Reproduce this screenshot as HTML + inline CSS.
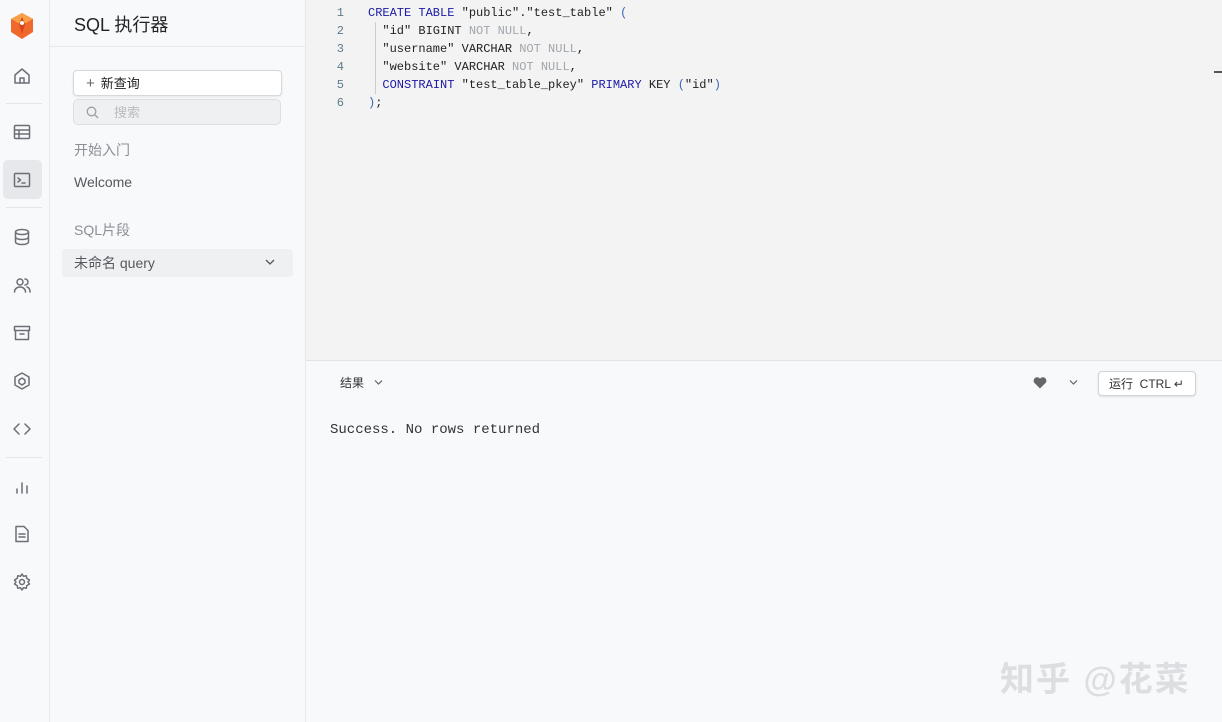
<!DOCTYPE html>
<html><head><meta charset="utf-8"><style>
*{box-sizing:border-box;margin:0;padding:0}
body{width:1222px;height:722px;overflow:hidden;background:#f8f9fa;font-family:"Liberation Sans","Noto Sans CJK SC",sans-serif;position:relative}
.nav{position:absolute;left:0;top:0;width:50px;height:722px;border-right:1px solid #e6e8eb;background:#f8f9fa}
.nav svg{position:absolute;left:12px;width:20px;height:20px;fill:none;stroke:#6b6f76;stroke-width:1.5;stroke-linecap:round;stroke-linejoin:round}
.sep{position:absolute;left:6px;width:36px;height:1px;background:#e3e5e8}
.side{position:absolute;left:50px;top:0;width:256px;height:722px;border-right:1px solid #e6e8eb}
.title{height:47px;border-bottom:1px solid #e6e8eb;padding:11px 0 0 24px;font-size:18px;color:#1f2328}
.btn{position:absolute;left:23px;top:70px;width:209px;height:26px;border:1px solid #d5d8dc;border-radius:4px;background:#fff;box-shadow:0 1px 2px rgba(0,0,0,.08);font-size:13px;color:#222;padding:2px 0 0 12px}
.search{position:absolute;left:23px;top:99px;width:208px;height:26px;border:1px solid #dcdfe2;border-radius:5px;background:#eff0f2;font-size:13px;color:#b8bcc2;padding:2px 0 0 40px}
.lbl{position:absolute;left:24px;font-size:14px;color:#8a8f96}
.item{position:absolute;font-size:14px;color:#55595f}
.editor{position:absolute;left:306px;top:0;width:916px;height:361px;background:#f3f3f3;border-bottom:1px solid #e2e4e6}
.code{position:absolute;left:0;top:3px;font-family:"Liberation Mono",monospace;font-size:12px;line-height:18px;white-space:pre;color:#222}
.ln{position:absolute;left:28px;width:10px;color:#5d7a8c;text-align:right}
.kw{color:#1a1aa6}.g{color:#a0a6ad}.p{color:#3b66b5}
.res{position:absolute;left:306px;top:362px;width:916px;height:360px;background:#f8f9fa}
.run{position:absolute;left:792px;top:9px;width:98px;height:25px;border:1px solid #d0d3d7;border-radius:4px;background:#fff;box-shadow:0 1px 2px rgba(0,0,0,.1);font-size:12px;color:#333;padding:3px 0 0 10px}
</style></head><body>
<div class="nav">
<svg style="top:12px;left:9px;width:26px;height:28px" viewBox="0 0 26 28"><polygon points="13,1 24,7 24,20 13,27 2,20 2,7" fill="#f0682c" stroke="none"/><polygon points="13,1 24,7 13,13 2,7" fill="#f7a049" stroke="none"/><polygon points="13,5 16,12 13,22 10,12" fill="#d9431a" stroke="none"/><circle cx="13" cy="11" r="2" fill="#fff" stroke="none"/></svg>
<svg style="top:66px" viewBox="0 0 20 20"><path d="M3 9l7-6 7 6v8H3z"/><path d="M8 17v-5h4v5"/></svg>
<div class="sep" style="top:103px"></div>
<svg style="top:122px" viewBox="0 0 20 20"><rect x="2.5" y="3.5" width="15" height="13" rx="1"/><path d="M2.5 8h15M2.5 12h15M7 8v8.5"/></svg>
<div style="position:absolute;left:3px;top:160px;width:39px;height:39px;background:#e6e8eb;border-radius:5px"></div>
<svg style="top:170px" viewBox="0 0 20 20"><rect x="2.5" y="3.5" width="15" height="13" rx="1"/><path d="M6 8l2.5 2L6 12M10 13h3"/></svg>
<div class="sep" style="top:207px"></div>
<svg style="top:227px" viewBox="0 0 20 20"><ellipse cx="10" cy="5" rx="6.5" ry="2.5"/><path d="M3.5 5v10c0 1.4 2.9 2.5 6.5 2.5s6.5-1.1 6.5-2.5V5M3.5 10c0 1.4 2.9 2.5 6.5 2.5s6.5-1.1 6.5-2.5"/></svg>
<svg style="top:275px" viewBox="0 0 20 20"><circle cx="8" cy="7" r="3"/><path d="M2.5 17c0-3 2.5-5 5.5-5s5.5 2 5.5 5M13 4a3 3 0 010 6M15 12c2 .5 3 2.5 3 5"/></svg>
<svg style="top:323px" viewBox="0 0 20 20"><rect x="2.5" y="3.5" width="15" height="4"/><path d="M3.5 7.5v9h13v-9M8 11h4"/></svg>
<svg style="top:371px" viewBox="0 0 20 20"><path d="M10 2l7 4v8l-7 4-7-4V6z"/><path d="M10 7l3 2v3l-3 2-3-2V9z"/></svg>
<svg style="top:419px" viewBox="0 0 20 20"><path d="M7 5l-5 5 5 5M13 5l5 5-5 5"/></svg>
<div class="sep" style="top:457px"></div>
<svg style="top:477px" viewBox="0 0 20 20"><path d="M5 16v-4M10 16V6M15 16v-7"/></svg>
<svg style="top:524px" viewBox="0 0 20 20"><path d="M4 2.5h8l4 4v11H4z"/><path d="M7 10h6M7 13h6"/></svg>
<svg style="top:572px" viewBox="0 0 20 20"><circle cx="10" cy="10" r="2.5"/><path d="M10 2l1.5 2.3 2.7-.6.6 2.7L17.5 8 16 10l1.5 2-2.7 1.6-.6 2.7-2.7-.6L10 18l-1.5-2.3-2.7.6-.6-2.7L2.5 12 4 10 2.5 8l2.7-1.6.6-2.7 2.7.6z"/></svg>
</div>
<div class="side">
<div class="title">SQL 执行器</div>
<div class="btn"><span style="color:#666;font-size:15px;margin-right:6px">+</span>新查询</div>
<div class="search"><svg style="position:absolute;left:12px;top:6px" width="13" height="13" viewBox="0 0 13 13" fill="none" stroke="#9aa0a6" stroke-width="1.3"><circle cx="5.5" cy="5.5" r="4.3"/><path d="M9 9l3 3"/></svg>搜索</div>
<div class="lbl" style="top:140px">开始入门</div>
<div class="item" style="left:24px;top:174px">Welcome</div>
<div class="lbl" style="top:220px">SQL片段</div>
<div style="position:absolute;left:12px;top:249px;width:231px;height:28px;background:#eff0f2;border-radius:4px"></div>
<div class="item" style="left:24px;top:253px">未命名 query</div>
<svg style="position:absolute;left:215px;top:258px" width="10" height="8" viewBox="0 0 10 8" fill="none" stroke="#555" stroke-width="1.3"><path d="M1 2l4 4 4-4"/></svg>
</div>
<div class="editor">
<div style="position:absolute;left:908px;top:71px;width:8px;height:2px;background:#555"></div>
<div style="position:absolute;left:69px;top:22px;width:1px;height:72px;background:#ccc"></div>
<div class="code" style="left:0;top:4px;width:40px;color:#5d7a8c"><span class="ln" style="top:0">1</span><span class="ln" style="top:18px">2</span><span class="ln" style="top:36px">3</span><span class="ln" style="top:54px">4</span><span class="ln" style="top:72px">5</span><span class="ln" style="top:90px">6</span></div>
<div class="code" style="left:62px;top:4px"><span class="kw">CREATE TABLE</span> "public"."test_table" <span class="p">(</span>
  "id" BIGINT <span class="g">NOT NULL</span>,
  "username" VARCHAR <span class="g">NOT NULL</span>,
  "website" VARCHAR <span class="g">NOT NULL</span>,
  <span class="kw">CONSTRAINT</span> "test_table_pkey" <span class="kw">PRIMARY</span> KEY <span class="p">(</span>"id"<span class="p">)</span>
<span class="p">)</span>;</div>
</div>
<div class="res">
<div style="position:absolute;left:34px;top:12px;font-size:12px;color:#333">结果</div>
<svg style="position:absolute;left:68px;top:17px" width="9" height="7" viewBox="0 0 9 7" fill="none" stroke="#666" stroke-width="1.2"><path d="M1 1.5l3.5 3.5 3.5-3.5"/></svg>
<svg style="position:absolute;left:727px;top:15px" width="14" height="12" viewBox="0 0 14 12"><path d="M7 11.5L1.3 5.8A3.2 3.2 0 017 1.7a3.2 3.2 0 015.7 4.1z" fill="#666"/></svg>
<svg style="position:absolute;left:763px;top:17px" width="9" height="7" viewBox="0 0 9 7" fill="none" stroke="#666" stroke-width="1.2"><path d="M1 1.5l3.5 3.5 3.5-3.5"/></svg>
<div class="run">运行 &nbsp;CTRL ↵</div>
<div style="position:absolute;left:24px;top:60px;font-family:'Liberation Mono',monospace;font-size:14px;color:#333">Success. No rows returned</div>
<div style="position:absolute;left:694px;top:290px;font-size:34px;color:#dcdee1;font-weight:bold;letter-spacing:2px">知乎 @花菜</div>
</div>
</body></html>
